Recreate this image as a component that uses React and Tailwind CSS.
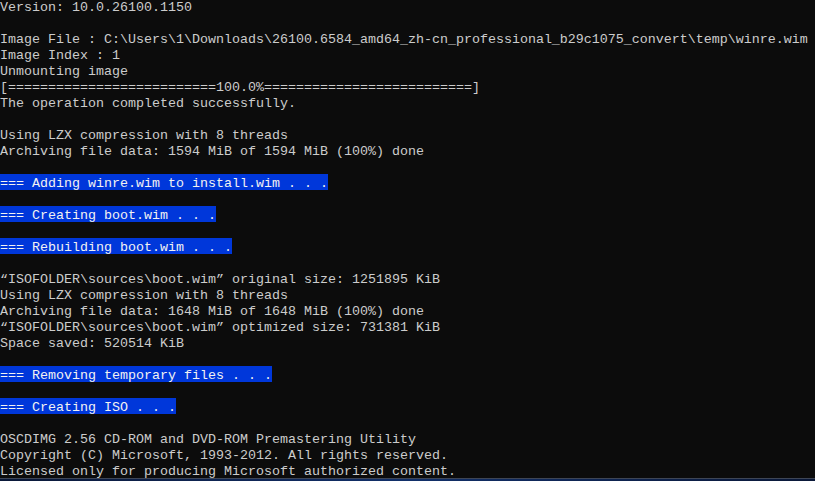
import React from "react";

const lines = [
  { t: "Version: 10.0.26100.1150" },
  { t: "" },
  { t: "Image File : C:\\Users\\1\\Downloads\\26100.6584_amd64_zh-cn_professional_b29c1075_convert\\temp\\winre.wim" },
  { t: "Image Index : 1" },
  { t: "Unmounting image" },
  { t: "[==========================100.0%==========================]" },
  { t: "The operation completed successfully." },
  { t: "" },
  { t: "Using LZX compression with 8 threads" },
  { t: "Archiving file data: 1594 MiB of 1594 MiB (100%) done" },
  { t: "" },
  { t: "=== Adding winre.wim to install.wim . . .", h: true },
  { t: "" },
  { t: "=== Creating boot.wim . . .", h: true },
  { t: "" },
  { t: "=== Rebuilding boot.wim . . .", h: true },
  { t: "" },
  { t: "\u201CISOFOLDER\\sources\\boot.wim\u201D original size: 1251895 KiB" },
  { t: "Using LZX compression with 8 threads" },
  { t: "Archiving file data: 1648 MiB of 1648 MiB (100%) done" },
  { t: "\u201CISOFOLDER\\sources\\boot.wim\u201D optimized size: 731381 KiB" },
  { t: "Space saved: 520514 KiB" },
  { t: "" },
  { t: "=== Removing temporary files . . .", h: true },
  { t: "" },
  { t: "=== Creating ISO . . .", h: true },
  { t: "" },
  { t: "OSCDIMG 2.56 CD-ROM and DVD-ROM Premastering Utility" },
  { t: "Copyright (C) Microsoft, 1993-2012. All rights reserved." },
  { t: "Licensed only for producing Microsoft authorized content." },
];

export default function App() {
  return (
    <div className="w-[815px] h-[481px] bg-[#0c0c0c] flex flex-col overflow-hidden">
      <div
        className="flex-1 overflow-hidden text-[#cccccc] text-[13.3333px]"
        style={{ fontFamily: '"Liberation Mono", "DejaVu Sans Mono", monospace' }}
      >
        <div className="-mt-[2px] flex flex-col">
          {lines.map((l, i) => (
            <div key={i} className="h-[16px] leading-[20px] whitespace-pre">
              {l.h ? (
                <span className="inline-block align-top h-[16px] leading-[20px] bg-[#0037da] text-[#f2f2f2]">
                  {l.t}
                </span>
              ) : (
                l.t || "\u00a0"
              )}
            </div>
          ))}
        </div>
      </div>
      <div className="h-[1px] bg-[#3e4657]" />
      <div className="h-[2px] bg-gradient-to-r from-[#0a1838] via-[#12306a] to-[#0a1838]" />
    </div>
  );
}
